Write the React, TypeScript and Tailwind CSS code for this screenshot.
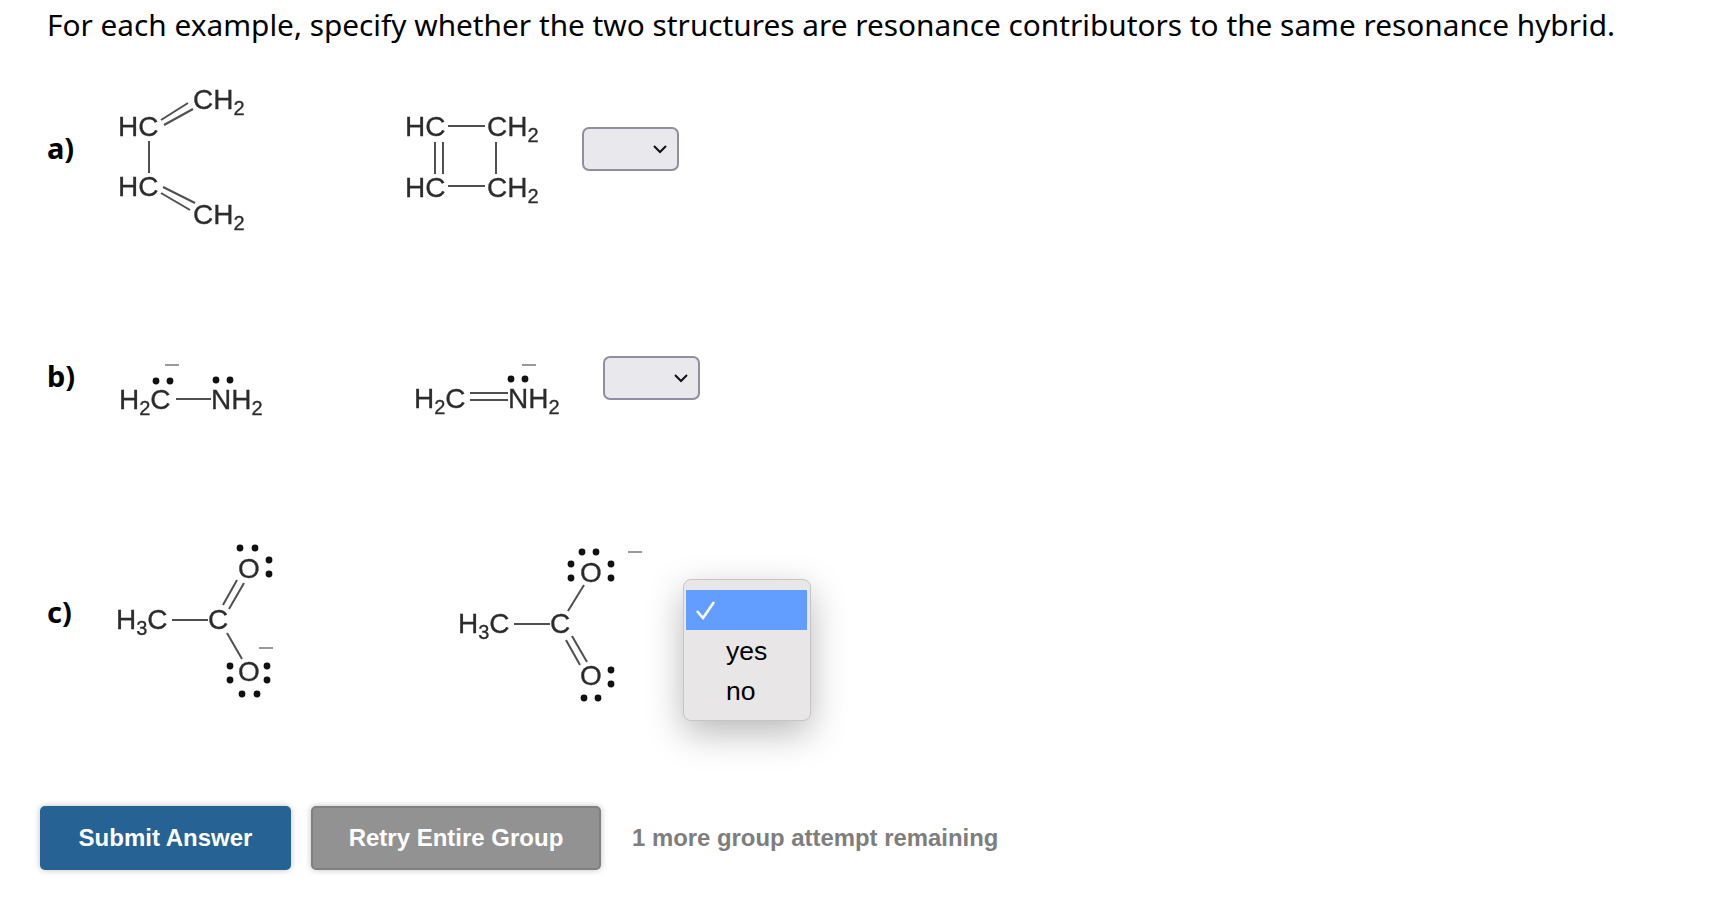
import React from "react";

// atom label with an optional subscript, coordinates are page pixels
const Atoms: React.FC<{ x: number; y: number; parts: (string | [string])[] }> = ({ x, y, parts }) => {
  let low = false;
  return (
    <text
      x={x}
      y={y}
      className="font-['Liberation_Sans'] text-[28px] fill-[#2b2b2b] stroke-[#2b2b2b] stroke-[0.3px]"
    >
      {parts.map((p, i) => {
        if (typeof p === "string") {
          const dy = low ? -6 : 0;
          low = false;
          return (
            <tspan key={i} dy={dy}>
              {p}
            </tspan>
          );
        }
        low = true;
        return (
          <tspan key={i} dy={6} className="text-[20px]">
            {p[0]}
          </tspan>
        );
      })}
    </text>
  );
};

const Bond: React.FC<{ a: number[] }> = ({ a }) => (
  <line x1={a[0]} y1={a[1]} x2={a[2]} y2={a[3]} stroke="#505050" strokeWidth={2} />
);

const Dots: React.FC<{ at: number[][] }> = ({ at }) => (
  <>
    {at.map((d, i) => (
      <circle key={i} cx={d[0]} cy={d[1]} r={3.4} fill="#111" />
    ))}
  </>
);

const Minus: React.FC<{ x: number; y: number }> = ({ x, y }) => (
  <line x1={x} y1={y} x2={x + 14} y2={y} stroke="#999" strokeWidth={2} />
);

const Mol: React.FC<{ box: number[]; className?: string; children: React.ReactNode }> = ({ box, className, children }) => (
  <svg
    width={box[2]}
    height={box[3]}
    viewBox={box.join(" ")}
    className={"shrink-0 blur-[0.4px] " + (className || "")}
  >
    {children}
  </svg>
);

const Dropdown: React.FC<{ className?: string }> = ({ className }) => (
  <div
    className={
      "flex h-[44px] w-[97px] shrink-0 items-center justify-end rounded-[7px] border-2 border-[#8f8f9d] bg-[#e9e9ed] pr-[9px] " +
      (className || "")
    }
  >
    <svg width="16" height="10" viewBox="0 0 16 10">
      <path d="M2 2 L8 8 L14 2" fill="none" stroke="#111" strokeWidth="2" />
    </svg>
  </div>
);

const Label: React.FC<{ text: string; className?: string }> = ({ text, className }) => (
  <div
    className={
      "w-[63px] shrink-0 font-['Noto_Sans'] text-[29px] font-bold leading-[40px] text-black " + (className || "")
    }
  >
    {text}
  </div>
);

export default function App() {
  return (
    <div className="h-[920px] w-[1736px] overflow-hidden bg-white pl-[47px] pt-[4px]">
      <h1 className="font-['Noto_Sans'] text-[29.8px] font-normal leading-[42px] text-black">
        For each example, specify whether the two structures are resonance contributors to the same resonance hybrid.
      </h1>

      {/* a */}
      <div className="mt-[24px] flex h-[170px] items-start">
        <Label text="a)" className="pt-[58px]" />
        <Mol box={[110, 70, 180, 170]}>
          <Atoms x={193} y={109} parts={["CH", ["2"]]} />
          <Atoms x={118} y={136} parts={["HC"]} />
          <Atoms x={118} y={196} parts={["HC"]} />
          <Atoms x={193} y={224} parts={["CH", ["2"]]} />
          <Bond a={[149, 141, 149, 173]} />
          <Bond a={[161, 120, 188, 103]} />
          <Bond a={[164, 125, 193, 109]} />
          <Bond a={[163, 187, 195, 203]} />
          <Bond a={[161, 193, 190, 210]} />
        </Mol>
        <Mol box={[400, 70, 150, 170]} className="ml-[110px]">
          <Atoms x={405} y={136} parts={["HC"]} />
          <Atoms x={487} y={136} parts={["CH", ["2"]]} />
          <Atoms x={405} y={197} parts={["HC"]} />
          <Atoms x={487} y={197} parts={["CH", ["2"]]} />
          <Bond a={[448, 126, 485, 126]} />
          <Bond a={[448, 186, 485, 186]} />
          <Bond a={[435, 142, 435, 174]} />
          <Bond a={[443, 142, 443, 174]} />
          <Bond a={[496, 142, 496, 174]} />
        </Mol>
        <Dropdown className="ml-[32px] mt-[57px]" />
      </div>

      {/* b */}
      <div className="mt-[110px] flex h-[80px] items-start">
        <Label text="b)" className="pt-[6px]" />
        <Mol box={[110, 350, 180, 80]}>
          <Atoms x={119} y={409} parts={["H", ["2"], "C"]} />
          <Atoms x={211} y={409} parts={["NH", ["2"]]} />
          <Bond a={[176, 399, 211, 399]} />
          <Dots at={[[156, 381], [170, 381], [216, 380], [230, 380]]} />
          <Minus x={165} y={365} />
        </Mol>
        <Mol box={[410, 350, 160, 80]} className="ml-[120px]">
          <Atoms x={414} y={408} parts={["H", ["2"], "C"]} />
          <Atoms x={508} y={408} parts={["NH", ["2"]]} />
          <Bond a={[470, 393, 508, 393]} />
          <Bond a={[470, 400, 508, 400]} />
          <Dots at={[[511, 379], [525, 379]]} />
          <Minus x={522} y={365} />
        </Mol>
        <Dropdown className="ml-[33px] mt-[6px]" />
      </div>

      {/* c */}
      <div className="relative mt-[100px] flex h-[200px] items-start">
        <div className="pt-[62px]">
          <Label text="c)" />
        </div>
        <Mol box={[110, 530, 180, 200]}>
          <Atoms x={116} y={629} parts={["H", ["3"], "C"]} />
          <Atoms x={208} y={629} parts={["C"]} />
          <Atoms x={238} y={578} parts={["O"]} />
          <Atoms x={238} y={681} parts={["O"]} />
          <Bond a={[172, 620, 208, 620]} />
          <Bond a={[223, 605, 237, 580]} />
          <Bond a={[229, 609, 244, 583]} />
          <Bond a={[227, 633, 242, 659]} />
          <Dots
            at={[
              [240, 548],
              [255, 548],
              [269, 560],
              [269, 574],
              [230, 666],
              [230, 680],
              [267, 666],
              [267, 680],
              [242, 694],
              [257, 694],
            ]}
          />
          <Minus x={259} y={648} />
        </Mol>
        <Mol box={[450, 530, 200, 200]} className="ml-[160px]">
          <Atoms x={458} y={633} parts={["H", ["3"], "C"]} />
          <Atoms x={550} y={633} parts={["C"]} />
          <Atoms x={580} y={582} parts={["O"]} />
          <Atoms x={580} y={685} parts={["O"]} />
          <Bond a={[514, 624, 550, 624]} />
          <Bond a={[568, 611, 584, 585]} />
          <Bond a={[566, 640, 580, 665]} />
          <Bond a={[572, 636, 587, 662]} />
          <Dots
            at={[
              [582, 552],
              [596, 552],
              [571, 564],
              [571, 578],
              [611, 564],
              [611, 578],
              [611, 670],
              [611, 684],
              [584, 698],
              [598, 698],
            ]}
          />
          <Minus x={628} y={552} />
        </Mol>

        {/* open select menu */}
        <div className="absolute left-[636px] top-[49px] h-[142px] w-[128px] rounded-[8px] border border-[#c6c4c5] bg-[#e8e6e7] pl-[2px] pr-[3px] pt-[10px] font-['Liberation_Sans'] text-[26.5px] text-black shadow-[0_12px_36px_rgba(0,0,0,0.28)]">
          <div className="flex h-[40px] items-center bg-[#619eff] pl-[9px]">
            <svg width="22" height="20" viewBox="0 0 22 20">
              <path d="M2 11 L8 18 L19 2" fill="none" stroke="#fff" strokeWidth="2.6" />
            </svg>
          </div>
          <div className="flex h-[40px] items-center pl-[40px] pt-[3px]">yes</div>
          <div className="flex h-[40px] items-center pl-[40px] pt-[3px]">no</div>
        </div>
      </div>

      {/* actions */}
      <div className="-ml-[7px] mt-[76px] flex h-[64px] items-center font-['Liberation_Sans'] text-[24px] font-bold">
        <button className="h-full w-[251px] rounded-[5px] bg-[#266294] text-white shadow-[0_0_6px_rgba(0,0,0,0.25)]">
          Submit Answer
        </button>
        <button className="ml-[20px] h-full w-[290px] rounded-[5px] border-2 border-[#808080] bg-[#929292] text-white shadow-[0_0_6px_rgba(0,0,0,0.25)]">
          Retry Entire Group
        </button>
        <span className="ml-[31px] text-[23.9px] text-[#7e7e7e]">1 more group attempt remaining</span>
      </div>
    </div>
  );
}
